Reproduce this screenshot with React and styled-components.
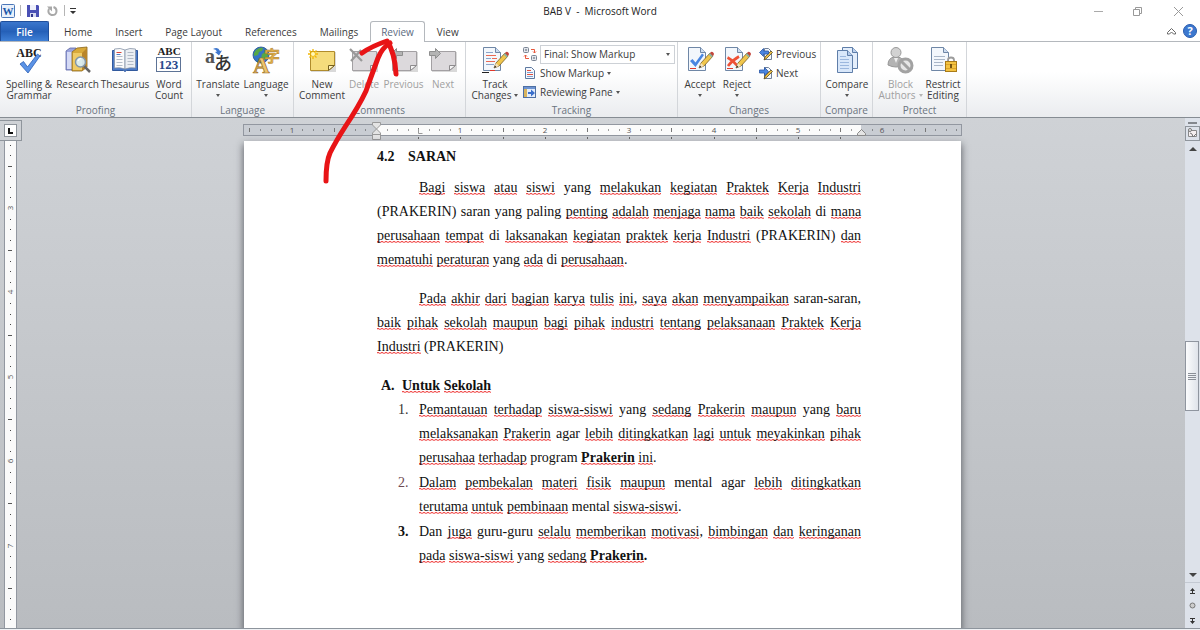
import React from 'react';
import styled, { createGlobalStyle, css } from 'styled-components';

const GlobalStyle = createGlobalStyle`
  * {
    box-sizing: border-box;
  }

  body {
    margin: 0;
    background: #fff;
    font-family: 'Open Sans', 'Noto Sans', sans-serif;
    font-size: 10px;
    color: #3b3b3b;
  }

  button {
    padding: 0;
    border: 0;
    background: none;
    font: inherit;
    color: inherit;
  }

  svg {
    display: block;
    flex: none;
    overflow: visible;
  }
`;

const Window = styled.div`
  position: relative;
  display: flex;
  flex-direction: column;
  height: 100vh;
  overflow: hidden;
  border-bottom: 1px solid #eef1f4;
`;

const TitleBar = styled.header`
  display: grid;
  grid-template-columns: 1fr auto 1fr;
  align-items: center;
  height: 21px;
`;

const QuickAccess = styled.div`
  display: flex;
  align-items: center;
  gap: 5px;
  height: 18px;
  padding-left: 1px;
`;

const Divider = styled.span`
  width: 1px;
  height: 11px;
  background: #b5b5b5;
`;

const Title = styled.h1`
  margin: 0;
  font-size: 10px;
  font-weight: 400;
  line-height: 20px;
  color: #222;
  white-space: pre;
`;

const WindowControls = styled.div`
  display: flex;
  justify-content: flex-end;
  gap: 28px;
  padding-right: 16px;
`;

const TabBar = styled.nav`
  display: flex;
  height: 21px;
  border-bottom: 1px solid #b4b8bd;
`;

const FileTab = styled.button`
  width: 49px;
  height: 20px;
  margin-right: 4px;
  border: 1px solid #1f4f9c;
  border-bottom: 0;
  border-radius: 2px 2px 0 0;
  background: linear-gradient(#3a76cc, #2560b8 50%, #3f80d6);
  color: #fff;
  font-weight: 600;
`;

const Tab = styled.button`
  height: 21px;
  margin-right: 1px;
  padding: 0 10px;
  border: 1px solid transparent;
  border-bottom: 0;
  line-height: 18px;

  ${props => props.$active && css`
    border-color: #b4b8bd;
    border-radius: 3px 3px 0 0;
    background: #fff;
    color: #5a6a80;
  `}
`;

const TabBarEnd = styled.div`
  display: flex;
  align-items: center;
  gap: 7px;
  margin-left: auto;
  padding-right: 3px;
`;

const RibbonBar = styled.div`
  display: flex;
  height: 76px;
  border-bottom: 1px solid #868c93;
  background: linear-gradient(#fff 40%, #eaecef);
`;

const Group = styled.section`
  display: flex;
  flex-direction: column;
  width: ${props => props.$width}px;
  padding-top: 3px;
  border-right: 1px solid #d3d6da;
`;

const GroupBody = styled.div`
  display: flex;
  flex: 1;
  padding-left: ${props => props.$inset}px;
`;

const GroupName = styled.h2`
  margin: 0;
  font-size: 10px;
  font-weight: 400;
  line-height: 14px;
  text-align: center;
  color: #6b7480;
`;

const BigButton = styled.button`
  display: flex;
  flex-direction: column;
  align-items: center;
  width: ${props => props.$width}px;
  padding-top: 1px;
  line-height: 11px;
  white-space: nowrap;
  color: ${props => (props.disabled ? '#a0a0a0' : '#3b3b3b')};

  svg {
    margin-bottom: 5px;
  }
`;

const Line = styled.span`
  display: flex;
  align-items: center;
  justify-content: center;
  gap: 3px;
  height: 11px;
`;

const Caret = styled.i`
  width: 0;
  border: 2px solid transparent;
  border-top: 3px solid ${props => (props.$faded ? '#b5b5b5' : '#555')};
  border-bottom: 0;
`;

const SmallColumn = styled.div`
  display: flex;
  flex-direction: column;
  flex: 1;
  gap: 1px;
  padding-left: 4px;
`;

const SmallRow = styled.div`
  display: flex;
  align-items: center;
  gap: 3px;
  height: 18px;
`;

const SmallButton = styled.button`
  display: flex;
  align-items: center;
  gap: 3px;
  height: 18px;
  white-space: nowrap;
`;

const SelectBox = styled.div`
  display: flex;
  align-items: center;
  flex: 1;
  height: 19px;
  margin-right: 2px;
  padding-right: 4px;
  border: 1px solid #cdd1d6;
  background: #fff;
`;

const Select = styled.select`
  flex: 1;
  height: 17px;
  padding: 0 0 0 3px;
  border: 0;
  background: none;
  appearance: none;
  font: inherit;
  color: inherit;
`;

const Workspace = styled.main`
  display: flex;
  flex: 1;
  min-height: 0;
  border-bottom: 1px solid #8d949c;
  background: linear-gradient(#cfd2d6, #b9bcc0);
`;

const LeftRail = styled.aside`
  display: flex;
  flex-direction: column;
  align-items: flex-start;
  width: 22px;
  padding-top: 2px;
`;

const TabSelector = styled.button`
  display: flex;
  align-items: center;
  justify-content: center;
  width: 22px;
  height: 21px;
  border: 1px solid #8f959c;
  border-left: 0;

  svg {
    border: 1px solid #8f959c;
    background: #fff;
  }
`;

const VerticalTrack = styled.div`
  flex: 1;
  width: 13px;
  min-height: 0;
  margin-left: 4px;
  overflow: hidden;
  border: solid #9297a0;
  border-width: 0 1px;
  background: #fafafa;
`;

const Canvas = styled.div`
  display: flex;
  flex: 1;
  flex-direction: column;
  align-items: center;
  min-width: 0;
  padding-right: 2px;
  overflow: hidden;
`;

const RulerBox = styled.div`
  height: 23px;
  padding-top: 4px;
`;

const Sheet = styled.article`
  flex: 1;
  width: 717px;
  padding: 4px 100px 0 133px;
  background: #fff;
  box-shadow: 0 4px 7px 1px rgba(40, 44, 52, 0.6);
  font-family: 'Liberation Serif', 'Times New Roman', serif;
  font-size: 14px;
  line-height: 24px;
  color: #111;
`;

const Heading = styled.h3`
  display: flex;
  margin: 0 0 7px;
  font-size: 14px;
`;

const HeadingNumber = styled.span`
  width: 31px;
`;

const Paragraph = styled.p`
  margin: 0 0 15px;
  text-align: justify;
  text-indent: 42px;
`;

const SubHeading = styled.h4`
  display: flex;
  margin: 0;
  padding-left: 4px;
  font-size: 14px;
`;

const SubHeadingLetter = styled.span`
  width: 21px;
`;

const List = styled.ol`
  display: grid;
  gap: 1px;
  margin: 0;
  padding: 0;
  list-style: none;
`;

const Item = styled.li`
  display: flex;
  padding-left: 21px;
  text-align: justify;
`;

const ItemNumber = styled.span`
  flex: none;
  width: 21px;
  font-weight: ${props => (props.$bold ? 700 : 400)};
  color: ${props => props.$color};
`;

// zigzag spelling mark, two rows of dashes half a period apart
const Misspelled = styled.span`
  background-image:
    repeating-linear-gradient(90deg, #f0504f 0 2px, #fbc4c4 2px 4px),
    repeating-linear-gradient(90deg, #fbd0d0 0 2px, #f47c7c 2px 4px);
  background-repeat: repeat-x;
  background-size: 4px 1px;
  background-position: 0 calc(100% - 1px), 0 100%;
`;

const ScrollRail = styled.aside`
  display: flex;
  flex-direction: column;
  align-items: center;
  width: 15px;
  padding-top: 4px;
  background: #dde2ea;
`;

const SplitHandle = styled.span`
  width: 9px;
  height: 2px;
  margin-bottom: 2px;
  background: #84888d;
`;

const RailButton = styled.button`
  display: flex;
  align-items: center;
  justify-content: center;
  width: 15px;
  height: 15px;
  border: ${props => (props.$boxed ? '1px solid #8f959c' : '0')};
`;

const Track = styled.div`
  display: flex;
  flex: 1;
  flex-direction: column;
  width: 15px;
`;

const TrackSpace = styled.span`
  flex: ${props => props.$grow};
`;

const Thumb = styled.button`
  display: flex;
  align-items: center;
  justify-content: center;
  width: 14px;
  height: 70px;
  border: 1px solid #8f959f;
  background: linear-gradient(90deg, #fbfcfd, #dfe3ea);
`;

const PageNav = styled.div`
  border-top: 1px solid #c3c9d2;
`;

const Annotation = styled.svg`
  position: absolute;
  top: 0;
  left: 300px;
  pointer-events: none;
`;

/* icons */

const Icon = ({ size = 28, children }) => (
  <svg width={size} height={size} viewBox={`0 0 ${size} ${size}`} fill="none" aria-hidden="true">
    {children}
  </svg>
);

const Pencil = () => (
  <g>
    <path d="M13 22l2-5 9-10 3 3-9 10z" fill="#f0c64c" stroke="#7a5d22" strokeWidth="0.8" />
    <path d="M13 22l2-5 3 3z" fill="#f6e3bd" />
    <path d="M13 22l1-2.4 1.4 1.4z" fill="#222" />
    <path d="M22.6 8.6L24 7l3 3-1.4 1.6z" fill="#8fb3a0" />
    <path d="M24 7q1.6-2 3.2-.6T27 10z" fill="#c4453c" />
  </g>
);

const PaperShape = () => (
  <g>
    <path d="M2.5 1.5h12l5 5v18h-17z" fill="#f3f7fc" stroke="#6f87a6" />
    <path d="M14.5 1.5v5h5" fill="#cddcf0" stroke="#6f87a6" />
  </g>
);

const NoteShape = ({ gray }) => (
  <g>
    <path d="M3 6h25v20H3z" fill="#000" opacity="0.15" />
    <path
      d="M2.5 5.5h24v14l-6 5h-18z"
      fill={gray ? '#dcd9dc' : '#f5dc7c'}
      stroke={gray ? '#a3a0a3' : '#b08c2c'}
    />
    <path
      d="M20.500 24.500v-5h6z"
      fill={gray ? '#f4f4f4' : '#fff3bd'}
      stroke={gray ? '#8d8b8d' : '#75601f'}
    />
  </g>
);

const SpellingIcon = () => (
  <Icon>
    <text x="14" y="11" textAnchor="middle" fontFamily="Liberation Serif, serif" fontSize="12" fontWeight="700" fill="#222">ABC</text>
    <path d="M5 18l3.5-2.5 4 5.5 10-13 2.5 2L13 27z" fill="#5b93e6" stroke="#2d5fb5" strokeWidth="0.8" />
  </Icon>
);

const ResearchIcon = () => (
  <Icon>
    <path d="M2 5l4-3h6v20l-3 2H2z" fill="#9aa3dc" stroke="#5b64a5" strokeWidth="0.8" />
    <path d="M3 6h5v17H3z" fill="#d5daf5" />
    <path d="M8 6l5-4 10-1v20l-5 4H8z" fill="#d8a93a" stroke="#8a661a" strokeWidth="0.8" />
    <path d="M9 7h9v17H9z" fill="#efca66" />
    <path d="M18 7l5-5v19l-5 4z" fill="#b9852a" />
    <path d="M20 20l6 6" stroke="#666" strokeWidth="2.5" />
    <circle cx="16.5" cy="16" r="5" fill="#d9effb" fillOpacity="0.9" stroke="#8296a8" strokeWidth="1.5" />
    <path d="M14 15q1-2.5 3-2.5" stroke="#fff" strokeWidth="1.2" />
  </Icon>
);

const ThesaurusIcon = () => (
  <Icon>
    <path d="M1.5 4.500h25v20h-11l-1.500 1-1.500-1h-11z" fill="#4d7cc9" stroke="#31599d" />
    <path d="M3.500 3q6-1.500 10.500 1v19q-5-2-10.500-1z" fill="#fbfbfb" stroke="#8492a6" strokeWidth="0.8" />
    <path d="M24.500 3q-6-1.500-10.500 1v19q5-2 10.500-1z" fill="#eceff3" stroke="#8492a6" strokeWidth="0.8" />
    <path d="M5.500 10.500h6m-6 3h6m-6 3h6m-6 3h6M16.500 6.500h6m-6 3h6m-6 3h6m-6 3h6m-6 3h6" stroke="#b4bcc7" />
    <path d="M5.500 6.500h5" stroke="#d9463b" />
    <path d="M5.500 8.500h4" stroke="#4d7cc9" />
  </Icon>
);

const WordCountIcon = () => (
  <Icon>
    <text x="14" y="9" textAnchor="middle" fontFamily="Liberation Serif, serif" fontSize="11" fontWeight="700" fill="#222">ABC</text>
    <rect x="1.5" y="11.5" width="24" height="14" fill="#fff" stroke="#5d7396" />
    <text x="13.5" y="23" textAnchor="middle" fontFamily="Liberation Serif, serif" fontSize="13" fontWeight="700" fill="#27488c">123</text>
  </Icon>
);

const TranslateIcon = () => (
  <Icon>
    <text x="1" y="17" fontFamily="Liberation Serif, serif" fontSize="20" fontWeight="700" fill="#555">a</text>
    <text x="10" y="24" fontFamily="Noto Sans CJK JP, sans-serif" fontSize="18" fontWeight="500" fill="#333">あ</text>
    <path d="M9 3q5-3 7 2l2-.5-3 5-4-3.500 2-.5q-1-2.500-4-2.500z" fill="#3f78cf" />
  </Icon>
);

const LanguageIcon = () => (
  <Icon>
    <circle cx="9" cy="9" r="8" fill="#3674c6" stroke="#22508f" strokeWidth="0.8" />
    <path d="M4 4q4-3 7-2l-1 3-3 1-1 3-4 1q-.5-3 2-6zM10 8l5-3 1 5-3 4-4-1z" fill="#57a845" />
    <text x="12" y="16" fontFamily="Noto Sans CJK SC, sans-serif" fontSize="16" fontWeight="700" fill="#e2b04a" stroke="#a87a28" strokeWidth="0.4">字</text>
    <text x="1" y="27" fontFamily="Liberation Serif, serif" fontSize="23" fontWeight="700" fill="#edc46c" stroke="#9a6d22" strokeWidth="0.7">A</text>
  </Icon>
);

const NewCommentIcon = () => (
  <Icon>
    <NoteShape />
    <path d="M5 3v10M0 8h10M1.500 4.500l7 7m0-7l-7 7" stroke="#f2b705" strokeWidth="1.300" />
    <circle cx="5" cy="8" r="2" fill="#fff7b8" />
  </Icon>
);

const DeleteCommentIcon = () => (
  <Icon>
    <NoteShape gray />
    <path d="M0 3l12 12M11 4L1 15" stroke="#999" strokeWidth="2.200" />
  </Icon>
);

const PreviousCommentIcon = () => (
  <Icon>
    <NoteShape gray />
    <path d="M12.500 5.500h-6v-3l-5 5 5 5v-3h6z" fill="#b4b4b4" stroke="#8f8f8f" />
  </Icon>
);

const NextCommentIcon = () => (
  <Icon>
    <NoteShape gray />
    <path d="M.5 5.500h6v-3l5 5-5 5v-3h-6z" fill="#b4b4b4" stroke="#8f8f8f" />
  </Icon>
);

const TrackChangesIcon = () => (
  <Icon>
    <PaperShape />
    <path d="M5 6.500h7M5 12.500h5m-5 6h8" stroke="#8ba6cb" />
    <path d="M5 9.500h10M11 12.500h5M5 15.500h9" stroke="#ea6a55" />
    <path d="M9 24.500h5" stroke="#e0392b" />
    <path d="M1 26.500h7" stroke="#222" />
    <Pencil />
  </Icon>
);

const AcceptIcon = () => (
  <Icon>
    <PaperShape />
    <path d="M4 15l2.500-2 3 3.500 6.500-9 2 1.500-8.500 12z" fill="#4a86e0" />
    <path d="M4 22.500h6" stroke="#e0392b" />
    <Pencil />
  </Icon>
);

const RejectIcon = () => (
  <Icon>
    <PaperShape />
    <path d="M4.500 11.500q6 3 10 8.500M16 10.500q-7 4-11 9.500" stroke="#ee5136" strokeWidth="2.600" />
    <path d="M4 22.500h6" stroke="#e0392b" />
    <Pencil />
  </Icon>
);

const CompareIcon = () => (
  <Icon>
    <path d="M9.500 1.500h10l5 5v16h-15z" fill="#e4eefb" stroke="#5f7ea9" />
    <path d="M19.500 1.500v5h5" fill="#bcd0ec" stroke="#5f7ea9" />
    <path d="M4.500 4.500h10l5 5v17h-15z" fill="#d8e7fa" stroke="#5f7ea9" />
    <path d="M14.500 4.500v5h5" fill="#b3caea" stroke="#5f7ea9" />
    <path d="M7 10.500h6m-6 3h9m-9 3h9m-9 3h9m-9 3h9" stroke="#9bb7de" />
  </Icon>
);

const BlockAuthorsIcon = () => (
  <Icon>
    <path d="M1 19q0-7 6-8h4q6 1 6 8-8 4-16 0z" fill="#b3b3b3" stroke="#979797" />
    <circle cx="9" cy="6.5" r="5" fill="#d2d2d2" stroke="#9a9a9a" />
    <path d="M7 12l2 5 2-5z" fill="#eee" />
    <circle cx="18.5" cy="19.5" r="6.5" fill="#e6e6e6" stroke="#a2a2a2" strokeWidth="3" />
    <path d="M14 15l9 9" stroke="#a2a2a2" strokeWidth="3" />
  </Icon>
);

const RestrictIcon = () => (
  <Icon>
    <PaperShape />
    <path d="M5 10.500h11m-11 3h11m-11 3h9m-9 3h9" stroke="#a9b6c8" />
    <path d="M19 16v-2q0-2.500 3-2.500t3 2.500v2" stroke="#9c9c9c" strokeWidth="1.800" />
    <rect x="16.5" y="15.5" width="11" height="10" fill="#f4c341" stroke="#a97b18" />
    <path d="M17 18.500h10m-10 4h10" stroke="#dca42b" />
    <path d="M22 18v4" stroke="#6a4b0c" strokeWidth="1.800" />
  </Icon>
);

const DisplayIcon = () => (
  <Icon size={14}>
    <rect x="0.5" y="0.5" width="5" height="5" rx="1" fill="#e2e6ec" stroke="#7a8494" />
    <rect x="8.5" y="8.5" width="5" height="5" rx="1" fill="#e2e6ec" stroke="#7a8494" />
    <path d="M2 3h2M10 11h2" stroke="#55606f" />
    <path d="M8 2.500h3.500V6M10 4.500L11.500 6 13 4.500M6 11.500H2.500V8M1 9.500L2.500 8 4 9.500" stroke="#e8583c" />
  </Icon>
);

const MarkupIcon = () => (
  <Icon size={14}>
    <path d="M2.500 1.500h6l3 3v8h-9z" fill="#f4f8fd" stroke="#5d78a0" />
    <path d="M4 6.500h6m-6 4h6" stroke="#7f9ecb" />
    <path d="M4 4.500h4m-4 4h6" stroke="#e2503f" />
  </Icon>
);

const PaneIcon = () => (
  <Icon size={14}>
    <rect x="0.5" y="1.5" width="12" height="11" fill="#e3edfb" stroke="#4e6fa3" />
    <path d="M1 3h11" stroke="#6d93d1" strokeWidth="2" />
    <path d="M1 4h3v8H1z" fill="#d9b45d" />
    <path d="M5 7h3V4.500L12 8l-4 3.500V9H5z" fill="#3a6fcc" />
  </Icon>
);

const StepIcon = ({ back }) => (
  <Icon size={14}>
    <path d="M5.500 1.500h4l3 3v8h-7z" fill="#f4f8fd" stroke="#71819a" />
    <path d="M5 13l1-3 6-6 1.500 1.500-6 6z" fill="#eabf49" stroke="#5d4a1d" strokeWidth="0.8" />
    <path
      d={back ? 'M.5 5.500l4-4v2.500h5v3h-5v2.500z' : 'M9.500 5.500l-4-4v2.500h-5v3h5v2.500z'}
      fill="#4a85e0"
      stroke="#2a57a6"
      strokeWidth="0.8"
    />
  </Icon>
);

/* rulers */

const INCH = 84.4;

const buildTicks = (origin, from, to) => {
  const ticks = [];
  for (let i = from; i <= to; i++) {
    ticks.push({ i, at: Math.round(origin + (i * INCH) / 8) });
  }
  return ticks;
};

const HorizontalTick = ({ i, at }) => {
  if (i === 0) return null;
  if (i % 8 === 0) {
    return (
      <text x={at} y="11" textAnchor="middle" fontFamily="Open Sans, sans-serif" fontSize="8" fill="#555">
        {Math.abs(i / 8)}
      </text>
    );
  }
  return i % 4 === 0
    ? <path d={`M${at + 0.5} 6v4`} stroke="#777" />
    : <path d={`M${at + 0.5} 7.500v1`} stroke="#444" />;
};

const VerticalTick = ({ i, at }) => {
  if (i % 8 === 0) {
    return (
      <text transform={`translate(8 ${at}) rotate(-90)`} textAnchor="middle" fontFamily="Open Sans, sans-serif" fontSize="8" fill="#555">
        {3 + i / 8}
      </text>
    );
  }
  return i % 4 === 0
    ? <path d={`M3 ${at + 0.5}h4`} stroke="#555" />
    : <path d={`M5 ${at + 0.5}h1`} stroke="#444" />;
};

const HorizontalRuler = () => (
  <svg width="719" height="18" fill="none" role="img" aria-label="Horizontal ruler">
    <rect x="0.5" y="2.5" width="718" height="11" fill="#c9cdd3" stroke="#9297a0" />
    <rect x="133" y="3" width="485" height="10" fill="#fbfbfb" />
    {buildTicks(133, -12, 55).map(tick => <HorizontalTick key={tick.i} {...tick} />)}
    {buildTicks(133, 1, 45).filter(tick => tick.i % 4 === 0).map(tick => (
      <path key={tick.i} d={`M${tick.at + 0.5} 15v2`} stroke="#666" />
    ))}
    <path d="M175.500 7v4.500h4" stroke="#999" />
    <path d="M129.500.5h8v2.500l-4 4-4-4z" fill="#e4e4e4" stroke="#9a9a9a" />
    <path d="M133.500 7l4 4v6.500h-8V11zM129.500 12.500h8" fill="#e4e4e4" stroke="#9a9a9a" />
    <path d="M618.500 7.500l4 4v2h-8v-2z" fill="#e4e4e4" stroke="#8a8a8a" />
  </svg>
);

const VerticalRuler = () => (
  <svg width="11" height="1200" fill="none" role="img" aria-label="Vertical ruler">
    {buildTicks(67, -6, 120).map(tick => <VerticalTick key={tick.i} {...tick} />)}
  </svg>
);

/* document text */

const DICTIONARY = ['yang', 'agar', 'mental', 'program', 'di', 'paling', 'saran', 'saran-saran', 'guru-guru', 'Dan', '(PRAKERIN)'];

const Word = ({ children }) => {
  const [, word, tail] = children.match(/^(.*?)([.,]?)$/);
  return (
    <>
      {DICTIONARY.includes(word) ? word : <Misspelled>{word}</Misspelled>}
      {tail}
    </>
  );
};

const Proofed = ({ children }) => children.split(' ').map((word, i) => (
  <React.Fragment key={i}>
    {i > 0 && ' '}
    <Word>{word}</Word>
  </React.Fragment>
));

const TABS = ['Home', 'Insert', 'Page Layout', 'References', 'Mailings', 'Review', 'View'];

const Big = ({ icon, width, lines, caret, disabled }) => (
  <BigButton $width={width} disabled={disabled}>
    {icon}
    {lines.map((line, i) => (
      <Line key={line}>
        {line}
        {caret && lines.length > 1 && i === lines.length - 1 && <Caret $faded={disabled} />}
      </Line>
    ))}
    {caret && lines.length === 1 && <Line><Caret /></Line>}
  </BigButton>
);

const RibbonGroup = ({ name, width, inset, children }) => (
  <Group $width={width} aria-label={name}>
    <GroupBody $inset={inset}>{children}</GroupBody>
    <GroupName>{name}</GroupName>
  </Group>
);

const Header = () => (
  <TitleBar>
    <QuickAccess>
      <Icon size={14}>
        <rect x="0.5" y="0.5" width="13" height="13" rx="1" fill="#e9f1fb" stroke="#4a76b8" />
        <text x="7" y="11" textAnchor="middle" fontFamily="Liberation Serif, serif" fontSize="11" fontWeight="700" fill="#1d57a8">W</text>
      </Icon>
      <Divider />
      <button aria-label="Save">
        <Icon size={14}>
          <path d="M1 1h11l1 1v11H1z" fill="#4a50b5" />
          <path d="M4 1h6v5H4z" fill="#eef0fb" />
          <path d="M4 9h6v4H4z" fill="#d8dbf0" />
          <path d="M5 10h2v3H5z" fill="#33388d" />
        </Icon>
      </button>
      <button aria-label="Undo">
        <Icon size={14}>
          <path d="M4 4.500q-2 5 2.500 6.500 5 .5 5-4 0-3-3-4" stroke="#a8a8a8" strokeWidth="2" />
          <path d="M2 2.500h5v5z" fill="#a8a8a8" />
        </Icon>
      </button>
      <Divider />
      <button aria-label="Customize toolbar">
        <svg width="6" height="6" aria-hidden="true">
          <path d="M0 0h6v1H0zM0 3h6L3 6z" fill="#333" />
        </svg>
      </button>
    </QuickAccess>
    <Title>BAB V  -  Microsoft Word</Title>
    <WindowControls>
      <button aria-label="Minimize">
        <Icon size={12}><path d="M2 6.500h9" stroke="#aaa" /></Icon>
      </button>
      <button aria-label="Restore">
        <Icon size={12}><path d="M1.500 4.500h6v6h-6zM3.500 4V2.500h6v6H8" stroke="#999" /></Icon>
      </button>
      <button aria-label="Close">
        <Icon size={12}><path d="M2 2l9 9m0-9l-9 9" stroke="#999" /></Icon>
      </button>
    </WindowControls>
  </TitleBar>
);

const Ribbon = () => (
  <RibbonBar>
    <RibbonGroup name="Proofing" width={192} inset={4}>
      <Big icon={<SpellingIcon />} width={50} lines={['Spelling &', 'Grammar']} />
      <Big icon={<ResearchIcon />} width={47} lines={['Research']} />
      <Big icon={<ThesaurusIcon />} width={48} lines={['Thesaurus']} />
      <Big icon={<WordCountIcon />} width={40} lines={['Word', 'Count']} />
    </RibbonGroup>
    <RibbonGroup name="Language" width={102} inset={2}>
      <Big icon={<TranslateIcon />} width={48} lines={['Translate']} caret />
      <Big icon={<LanguageIcon />} width={48} lines={['Language']} caret />
    </RibbonGroup>
    <RibbonGroup name="Comments" width={172} inset={5}>
      <Big icon={<NewCommentIcon />} width={46} lines={['New', 'Comment']} />
      <Big icon={<DeleteCommentIcon />} width={38} lines={['Delete']} disabled />
      <Big icon={<PreviousCommentIcon />} width={41} lines={['Previous']} disabled />
      <Big icon={<NextCommentIcon />} width={38} lines={['Next']} disabled />
    </RibbonGroup>
    <RibbonGroup name="Tracking" width={212} inset={5}>
      <Big icon={<TrackChangesIcon />} width={48} lines={['Track', 'Changes']} caret />
      <SmallColumn>
        <SmallRow>
          <DisplayIcon />
          <SelectBox>
            <Select aria-label="Display for review" defaultValue="final-markup">
              <option value="final-markup">Final: Show Markup</option>
              <option value="final">Final</option>
              <option value="original">Original</option>
            </Select>
            <Caret />
          </SelectBox>
        </SmallRow>
        <SmallButton><MarkupIcon />Show Markup<Caret /></SmallButton>
        <SmallButton><PaneIcon />Reviewing Pane<Caret /></SmallButton>
      </SmallColumn>
    </RibbonGroup>
    <RibbonGroup name="Changes" width={143} inset={3}>
      <Big icon={<AcceptIcon />} width={38} lines={['Accept']} caret />
      <Big icon={<RejectIcon />} width={36} lines={['Reject']} caret />
      <SmallColumn>
        <SmallButton><StepIcon back />Previous</SmallButton>
        <SmallButton><StepIcon />Next</SmallButton>
      </SmallColumn>
    </RibbonGroup>
    <RibbonGroup name="Compare" width={52} inset={3}>
      <Big icon={<CompareIcon />} width={46} lines={['Compare']} caret />
    </RibbonGroup>
    <RibbonGroup name="Protect" width={94} inset={6}>
      <Big icon={<BlockAuthorsIcon />} width={43} lines={['Block', 'Authors']} caret disabled />
      <Big icon={<RestrictIcon />} width={42} lines={['Restrict', 'Editing']} />
    </RibbonGroup>
  </RibbonBar>
);

const Document = () => (
  <Sheet>
    <Heading><HeadingNumber>4.2</HeadingNumber>SARAN</Heading>
    <Paragraph>
      <Proofed>
        Bagi siswa atau siswi yang melakukan kegiatan Praktek Kerja Industri (PRAKERIN) saran yang paling penting adalah menjaga nama baik sekolah di mana perusahaan tempat di laksanakan kegiatan praktek kerja Industri (PRAKERIN) dan mematuhi peraturan yang ada di perusahaan.
      </Proofed>
    </Paragraph>
    <Paragraph>
      <Proofed>
        Pada akhir dari bagian karya tulis ini, saya akan menyampaikan saran-saran, baik pihak sekolah maupun bagi pihak industri tentang pelaksanaan Praktek Kerja Industri (PRAKERIN)
      </Proofed>
    </Paragraph>
    <SubHeading>
      <SubHeadingLetter>A.</SubHeadingLetter>
      <span><Proofed>Untuk Sekolah</Proofed></span>
    </SubHeading>
    <List>
      <Item>
        <ItemNumber $color="#333">1.</ItemNumber>
        <span>
          <Proofed>
            Pemantauan terhadap siswa-siswi yang sedang Prakerin maupun yang baru melaksanakan Prakerin agar lebih ditingkatkan lagi untuk meyakinkan pihak perusahaa terhadap program
          </Proofed>
          {' '}<b><Proofed>Prakerin</Proofed></b>{' '}
          <Proofed>ini.</Proofed>
        </span>
      </Item>
      <Item>
        <ItemNumber $color="#6d4a52">2.</ItemNumber>
        <span>
          <Proofed>
            Dalam pembekalan materi fisik maupun mental agar lebih ditingkatkan terutama untuk pembinaan mental siswa-siswi.
          </Proofed>
        </span>
      </Item>
      <Item>
        <ItemNumber $color="#111" $bold>3.</ItemNumber>
        <span>
          <Proofed>
            Dan juga guru-guru selalu memberikan motivasi, bimbingan dan keringanan pada siswa-siswi yang sedang
          </Proofed>
          {' '}<b><Proofed>Prakerin.</Proofed></b>
        </span>
      </Item>
    </List>
  </Sheet>
);

const Scrollbar = () => (
  <ScrollRail>
    <SplitHandle />
    <RailButton $boxed aria-label="Toggle ruler">
      <Icon size={11}>
        <path d="M1.500 2.500h8v6h-8z" fill="#f5eff0" stroke="#888" />
        <circle cx="3" cy="2" r="1.5" fill="#eee" stroke="#777" />
        <path d="M3 5l2 1 1 3 3-3" stroke="#777" />
      </Icon>
    </RailButton>
    <RailButton aria-label="Scroll up">
      <svg width="8" height="4"><path d="M0 4l4-4 4 4z" fill="#444" /></svg>
    </RailButton>
    <Track>
      <TrackSpace $grow={187} />
      <Thumb aria-label="Scroll position">
        <svg width="8" height="8"><path d="M0 1.500h8M0 3.500h8M0 5.500h8M0 7.500h8" stroke="#8b9098" /></svg>
      </Thumb>
      <TrackSpace $grow={157} />
    </Track>
    <RailButton aria-label="Scroll down">
      <svg width="8" height="4"><path d="M0 0h8L4 4z" fill="#444" /></svg>
    </RailButton>
    <PageNav>
      <RailButton aria-label="Previous page">
        <svg width="5" height="6"><path d="M0 3l2.500-3L5 3zM2 3h1v2H2zM0 5h5v1H0z" fill="#333" /></svg>
      </RailButton>
      <RailButton aria-label="Select browse object">
        <svg width="7" height="7"><circle cx="3.5" cy="3.5" r="2.5" fill="#ccc" stroke="#777" /></svg>
      </RailButton>
      <RailButton aria-label="Next page">
        <svg width="5" height="6"><path d="M0 3l2.500 3L5 3zM2 1h1v2H2zM0 0h5v1H0z" fill="#333" /></svg>
      </RailButton>
    </PageNav>
  </ScrollRail>
);

const App = () => (
  <Window>
    <GlobalStyle />
    <Header />
    <TabBar>
      <FileTab>File</FileTab>
      {TABS.map(tab => <Tab key={tab} $active={tab === 'Review'}>{tab}</Tab>)}
      <TabBarEnd>
        <button aria-label="Minimize the ribbon">
          <svg width="9" height="7" fill="none"><path d="M.5 4.500l4-4 4 4v1.500h-2l-2-2-2 2h-2z" stroke="#666" /></svg>
        </button>
        <button aria-label="Help">
          <Icon size={14}>
            <circle cx="7" cy="7" r="6.5" fill="#3c78cf" stroke="#2a5cae" />
            <text x="7" y="11" textAnchor="middle" fontFamily="Open Sans, sans-serif" fontSize="11" fontWeight="700" fill="#fff">?</text>
          </Icon>
        </button>
      </TabBarEnd>
    </TabBar>
    <Ribbon />
    <Workspace>
      <LeftRail>
        <TabSelector aria-label="Tab stop">
          <svg width="13" height="13" fill="none"><path d="M4 3v5h4" stroke="#111" strokeWidth="2" /></svg>
        </TabSelector>
        <VerticalTrack><VerticalRuler /></VerticalTrack>
      </LeftRail>
      <Canvas>
        <RulerBox><HorizontalRuler /></RulerBox>
        <Document />
      </Canvas>
      <Scrollbar />
    </Workspace>
    <Annotation width="120" height="190" fill="none" stroke="#e81416" strokeWidth="5" strokeLinecap="round" strokeLinejoin="round" aria-hidden="true">
      <path d="M26 181Q26 162 30 153Q36 141 45 127Q59 106 66 91Q72 74 78 58Q82 48 90 43" />
      <path d="M62 53Q72 46 87 41Q95 53 96 74" />
    </Annotation>
  </Window>
);

export default App;
